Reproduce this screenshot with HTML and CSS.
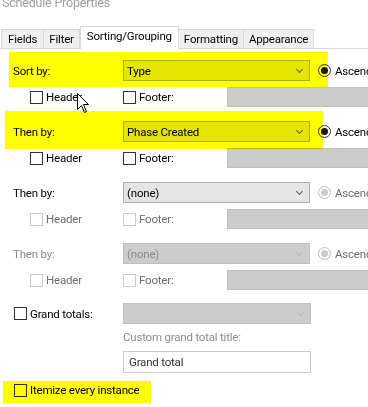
FILE: index.html
```html
<!DOCTYPE html>
<html>
<head>
  <meta charset="UTF-8">
  <link rel="stylesheet" href="styles.css">
</head>
<body>
  <div class="window">
    <div class="window-title">Schedule Properties</div>

    <div class="tabs">
      <div class="tab">Fields</div>
      <div class="tab">Filter</div>
      <div class="tab tab-active">Sorting/Grouping</div>
      <div class="tab">Formatting</div>
      <div class="tab">Appearance</div>
    </div>

    <div class="panel">
      <!-- Sort groups -->
      <div class="group">
        <div class="sort-row">
          <span class="label">Sort by:</span>
          <div class="select"><span>Type</span><span class="chevron"></span></div>
          <span class="radio checked"></span><span class="radio-text">Ascending</span>
        </div>
        <div class="sub-row">
          <span class="check-label header-col"><span class="checkbox"></span>Header</span>
          <span class="check-label footer-col"><span class="checkbox"></span>Footer:</span>
          <div class="field"></div>
        </div>
      </div>

      <div class="group">
        <div class="sort-row">
          <span class="label">Then by:</span>
          <div class="select"><span>Phase Created</span><span class="chevron"></span></div>
          <span class="radio checked"></span><span class="radio-text">Ascending</span>
        </div>
        <div class="sub-row">
          <span class="check-label header-col"><span class="checkbox"></span>Header</span>
          <span class="check-label footer-col"><span class="checkbox"></span>Footer:</span>
          <div class="field"></div>
        </div>
      </div>

      <div class="group">
        <div class="sort-row">
          <span class="label">Then by:</span>
          <div class="select"><span>(none)</span><span class="chevron"></span></div>
          <span class="radio off"></span><span class="radio-text muted">Ascending</span>
        </div>
        <div class="sub-row muted">
          <span class="check-label header-col"><span class="checkbox off"></span>Header</span>
          <span class="check-label footer-col"><span class="checkbox off"></span>Footer:</span>
          <div class="field"></div>
        </div>
      </div>

      <div class="group disabled">
        <div class="sort-row">
          <span class="label">Then by:</span>
          <div class="select"><span>(none)</span><span class="chevron"></span></div>
          <span class="radio off"></span><span class="radio-text muted">Ascending</span>
        </div>
        <div class="sub-row muted">
          <span class="check-label header-col"><span class="checkbox off"></span>Header</span>
          <span class="check-label footer-col"><span class="checkbox off"></span>Footer:</span>
          <div class="field"></div>
        </div>
      </div>

      <!-- Totals -->
      <div class="totals-row">
        <span class="check-label totals-col"><span class="checkbox"></span>Grand totals:</span>
        <div class="select select-off"><span></span><span class="chevron"></span></div>
      </div>
      <div class="custom-title">Custom grand total title:</div>
      <div class="text-input">Grand total</div>

      <div class="itemize-row">
        <span class="check-label"><span class="checkbox"></span>Itemize every instance</span>
      </div>
    </div>

    <!-- highlighter marks drawn over the dialog -->
    <div class="mark mark-1"></div>
    <div class="mark mark-2"></div>
    <div class="mark mark-3"></div>

    <svg class="cursor" width="13" height="21" viewBox="0 0 13 21">
      <path d="M0.5 0.5 L0.5 16.5 L4.5 12.5 L7.5 19.5 L9.5 18.5 L6.5 11.5 L11.5 11.5 Z" fill="#fff" stroke="#000" stroke-width="1" stroke-linejoin="miter"/>
    </svg>
  </div>
</body>
</html>
```

FILE: styles.css
```css
body {
  margin: 0;
  padding: 0;
  background-color: white;
  font-family: Roboto, "Noto Sans", sans-serif;
  font-size: 11.5px;
  letter-spacing: -0.2px;
  color: #000;
  overflow: hidden;
}
.window {
  position: relative;
  width: 368px;
  height: 407px;
  overflow: hidden;
  white-space: nowrap;
}
.window-title {
  margin-top: -5px;
  padding-left: 2px;
  height: 16px;
  line-height: 16px;
  font-size: 12.5px;
  color: #a0a0a0;
}
/* Tabs */
.tabs {
  display: flex;
  align-items: flex-end;
  margin-top: 16px;
  padding-left: 1px;
  height: 21px;
  border-bottom: 1px solid #d9d9d9;
}
.tab {
  height: 18px;
  line-height: 18px;
  padding: 0 5px;
  background-color: #f0f0f0;
  border: 1px solid #d9d9d9;
  border-bottom: none;
  margin-right: -1px;
}
.tab:first-child {
  padding: 0 6px;
}
.tab-active {
  height: 21px;
  line-height: 19px;
  background-color: white;
  margin-bottom: -1px;
  padding: 0 6px 1px;
  margin-left: 1px;
  position: relative;
}
/* Panel */
.panel {
  padding: 11px 0 0 13px;
}
.group {
  margin-bottom: 14px;
}
.sort-row {
  display: flex;
  align-items: center;
  height: 21px;
}
.label {
  width: 110px;
  flex-shrink: 0;
}
.select {
  width: 187px;
  height: 21px;
  flex-shrink: 0;
  box-sizing: border-box;
  border: 1px solid #adadad;
  background-color: #e5e5e5;
  display: flex;
  align-items: center;
  justify-content: space-between;
  padding: 0 7px 0 3px;
}
.chevron {
  width: 4px;
  height: 4px;
  border-right: 1px solid #606060;
  border-bottom: 1px solid #606060;
  transform: rotate(45deg);
  margin-top: -3px;
}
.radio {
  width: 11px;
  height: 11px;
  border: 1px solid #333;
  border-radius: 50%;
  margin-left: 8px;
  flex-shrink: 0;
  display: flex;
  align-items: center;
  justify-content: center;
  background-color: white;
}
.radio::after {
  content: "";
  width: 7px;
  height: 7px;
  border-radius: 50%;
  background-color: #1a1a1a;
}
.radio.off {
  border-color: #bcbcbc;
}
.radio.off::after {
  background-color: #cccccc;
}
.radio-text {
  margin-left: 4px;
}
.muted {
  color: #6d6d6d;
}
.sub-row {
  display: flex;
  align-items: center;
  height: 20px;
  margin-top: 6px;
}
.check-label {
  display: flex;
  align-items: center;
  flex-shrink: 0;
}
.checkbox {
  width: 11px;
  height: 11px;
  border: 1px solid #333;
  background-color: white;
  margin-right: 3px;
  flex-shrink: 0;
}
.checkbox.off {
  border-color: #cccccc;
}
.header-col {
  margin-left: 17px;
  width: 93px;
}
.footer-col {
  width: 104px;
}
.field {
  width: 160px;
  height: 20px;
  flex-shrink: 0;
  box-sizing: border-box;
  background-color: #cccccc;
  border: 1px solid #bfbfbf;
}
/* Disabled group */
.disabled .label,
.disabled .select {
  color: #8a8a8a;
}
.disabled .select,
.select-off {
  background-color: #cccccc;
  border-color: #bfbfbf;
}
.disabled .chevron,
.select-off .chevron {
  border-color: #b5b5b5;
}
/* Totals */
.totals-row {
  display: flex;
  align-items: center;
  height: 21px;
  margin-top: -1px;
}
.totals-col {
  width: 109px;
  margin-left: 1px;
}
.totals-row .select {
  width: 188px;
}
.custom-title {
  margin: 5px 0 0 110px;
  height: 16px;
  line-height: 16px;
  color: #8d8d8d;
}
.text-input {
  margin: 6px 0 0 110px;
  width: 188px;
  height: 22px;
  box-sizing: border-box;
  border: 1px solid #cccccc;
  padding-left: 5px;
  line-height: 20px;
  color: #333;
}
.itemize-row {
  margin: 9px 0 0 1px;
  height: 16px;
  display: flex;
  align-items: center;
}
/* Highlighter marks */
.mark {
  position: absolute;
  background-color: #ffff00;
  mix-blend-mode: multiply;
}
.mark-1 {
  left: 9px;
  top: 52px;
  width: 319px;
  height: 35px;
}
.mark-2 {
  left: 5px;
  top: 111px;
  width: 318px;
  height: 38px;
}
.mark-3 {
  left: 3px;
  top: 381px;
  width: 148px;
  height: 22px;
}
.cursor {
  position: absolute;
  left: 77px;
  top: 93px;
}
```
